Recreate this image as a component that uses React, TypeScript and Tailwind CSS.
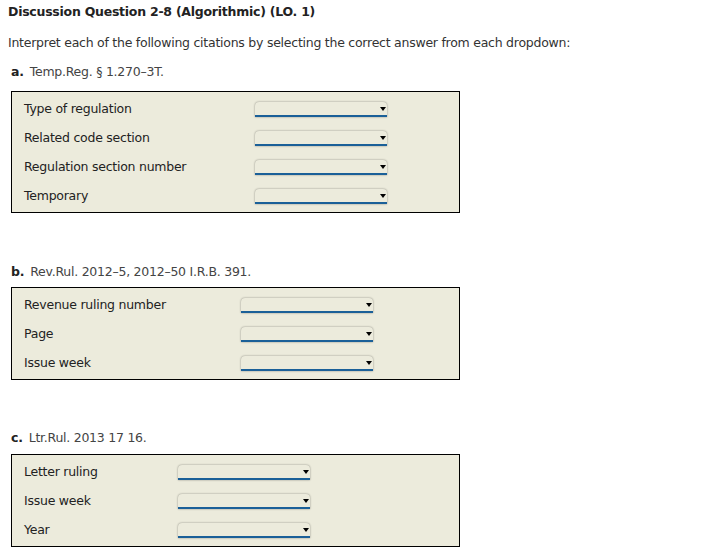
type Part = {
  letter: string;
  citation: string;
  labelWidth: string;
  lineGap: string;
  boxGap: string;
  fields: string[];
};

const parts: Part[] = [
  {
    letter: 'a.',
    citation: 'Temp.Reg. § 1.270–3T.',
    labelWidth: 'w-[231px]',
    lineGap: 'mt-[9px]',
    boxGap: 'mt-[9px]',
    fields: ['Type of regulation', 'Related code section', 'Regulation section number', 'Temporary'],
  },
  {
    letter: 'b.',
    citation: 'Rev.Rul. 2012–5, 2012–50 I.R.B. 391.',
    labelWidth: 'w-[217px]',
    lineGap: 'mt-[49px]',
    boxGap: 'mt-[5px]',
    fields: ['Revenue ruling number', 'Page', 'Issue week'],
  },
  {
    letter: 'c.',
    citation: 'Ltr.Rul. 2013 17 16.',
    labelWidth: 'w-[154px]',
    lineGap: 'mt-[48px]',
    boxGap: 'mt-[6px]',
    fields: ['Letter ruling', 'Issue week', 'Year'],
  },
];

// empty answer dropdown: soft grey outline, blue underline, black caret
function AnswerSelect() {
  return (
    <div className="relative w-[132px] h-[15px] rounded-t-[4px] border-b-2 border-[#1b6098] shadow-[0_0_2px_rgba(0,0,0,0.45)]">
      <span className="absolute right-[1px] top-[5px] w-0 h-0 border-l-[3.5px] border-r-[3.5px] border-t-[4px] border-l-transparent border-r-transparent border-t-black" />
    </div>
  );
}

function PartBlock({ part }: { part: Part }) {
  return (
    <div className={part.lineGap}>
      <div className="h-[20px] leading-[20px] pl-[3px] text-[#444]">
        <span className="font-bold text-[#222]">{part.letter}</span>
        <span className="ml-[6px]">{part.citation}</span>
      </div>
      <div className={`${part.boxGap} ml-[3px] w-[449px] border border-black bg-[#ecebdc] pt-[3px] pb-[1px]`}>
        {part.fields.map((f) => (
          <div key={f} className="flex items-center h-[29px] pl-[12px]">
            <span className={`${part.labelWidth} shrink-0 text-[#222]`}>{f}</span>
            <AnswerSelect />
          </div>
        ))}
      </div>
    </div>
  );
}

export default function App() {
  return (
    <div
      className="min-h-screen bg-white pl-[8px] pt-[2px] text-[12.5px] tracking-[-0.25px] text-[#333]"
      style={{ fontFamily: '"DejaVu Sans", Verdana, sans-serif' }}
    >
      <div className="h-[20px] leading-[20px] font-bold text-[#222]">
        Discussion Question 2-8 (Algorithmic) (LO. 1)
      </div>
      <div className="mt-[11px] h-[20px] leading-[20px]">
        Interpret each of the following citations by selecting the correct answer from each dropdown:
      </div>
      {parts.map((p) => (
        <PartBlock key={p.letter} part={p} />
      ))}
    </div>
  );
}
